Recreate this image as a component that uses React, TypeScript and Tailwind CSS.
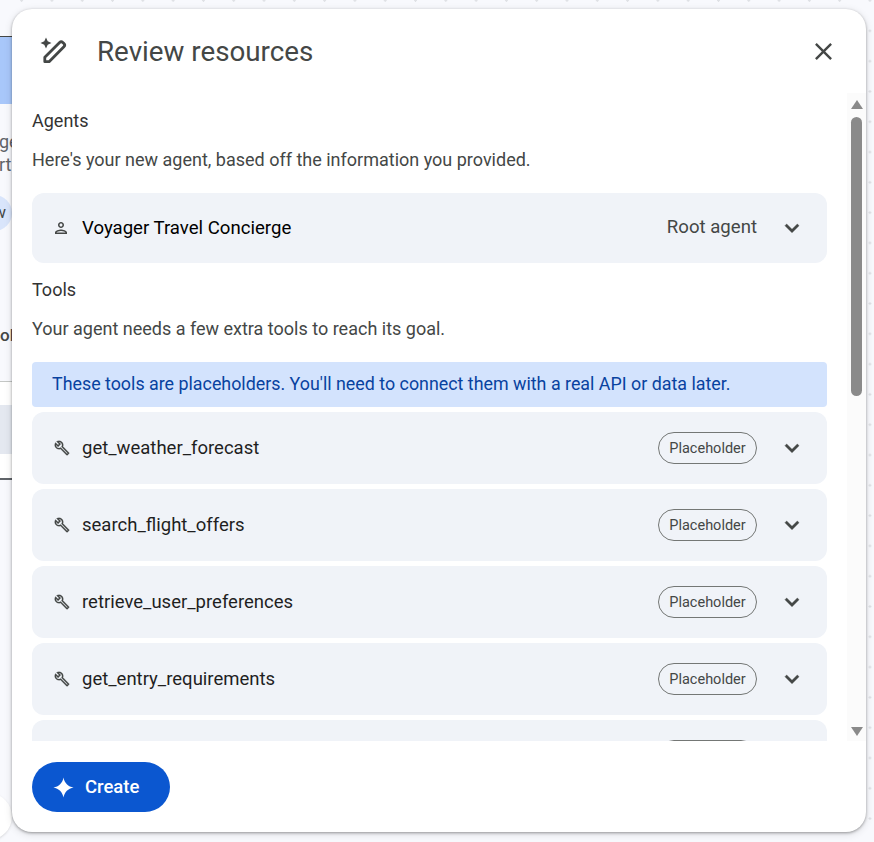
const TOOLS = [
  "get_weather_forecast",
  "search_flight_offers",
  "retrieve_user_preferences",
  "get_entry_requirements",
  "",
]

function ExpandIcon() {
  return (
    <svg viewBox="0 0 24 24" className="h-7 w-7 fill-[#444746] stroke-[#444746] stroke-[0.4]">
      <path d="M16.59 8.59L12 13.17 7.41 8.59 6 10l6 6 6-6z" />
    </svg>
  )
}

function PersonIcon() {
  return (
    <svg viewBox="0 0 24 24" className="h-[18px] w-[18px] fill-[#444746]">
      <path d="M12 6c1.1 0 2 .9 2 2s-.9 2-2 2-2-.9-2-2 .9-2 2-2m0 10c2.7 0 5.8 1.29 6 2H6c.23-.72 3.31-2 6-2m0-12C9.79 4 8 5.79 8 8s1.79 4 4 4 4-1.79 4-4-1.79-4-4-4zm0 10c-2.67 0-8 1.34-8 4v2h16v-2c0-2.66-5.33-4-8-4z" />
    </svg>
  )
}

function WrenchIcon() {
  return (
    <svg viewBox="0 0 24 24" className="h-4 w-4 fill-[#444746] stroke-[#444746] stroke-[0.3]">
      <path d="M22.61 18.99l-9.08-9.08c.93-2.34.45-5.1-1.44-7C9.79.61 6.21.4 3.66 2.26L7.5 6.11 6.08 7.52 2.25 3.69C.39 6.23.6 9.82 2.9 12.11c1.86 1.86 4.57 2.35 6.89 1.48l9.11 9.11c.39.39 1.02.39 1.41 0l2.3-2.3c.4-.38.4-1.01 0-1.41zm-3 1.6l-9.46-9.46c-.61.45-1.29.72-2 .82-1.36.2-2.79-.21-3.83-1.25C3.37 9.76 2.93 8.5 3 7.26l3.09 3.09 4.24-4.24-3.09-3.09c1.24-.07 2.49.37 3.44 1.31 1.08 1.08 1.49 2.57 1.24 3.96-.12.71-.42 1.37-.88 1.96l9.45 9.45-.88.89z" />
    </svg>
  )
}

function WandIcon() {
  return (
    <svg viewBox="0 0 30 30" className="h-[30px] w-[30px]">
      <path d="M7 0.5l1.7 3.8L12.5 6 8.7 7.7 7 11.5 5.3 7.7 1.5 6l3.8-1.7z" fill="#444746" />
      <path
        d="M5.8 24.7v-4.4L20.6 5.5c.9-.9 2.3-.9 3.2 0l1.1 1.1c.9.9.9 2.3 0 3.2L10.1 24.7z"
        fill="none"
        stroke="#444746"
        strokeWidth="2.8"
        strokeLinejoin="round"
      />
    </svg>
  )
}

function Row({ name }: { name: string }) {
  return (
    <div className="flex h-[72px] shrink-0 items-center rounded-xl bg-[#f0f3f8] pl-[22px] pr-[21px]">
      <WrenchIcon />
      <span className="ml-3 flex-1 pt-px text-[18.5px] text-[#1f1f1f]">{name}</span>
      <span className="flex h-8 w-[99px] items-center justify-center rounded-2xl border border-[#747775] pt-px text-[14.5px] text-[#444746]">
        Placeholder
      </span>
      <span className="ml-[21px] flex"><ExpandIcon /></span>
    </div>
  )
}

export default function App() {
  return (
    <div className="relative h-[842px] w-[874px] overflow-hidden bg-[#f8f9fd] bg-[radial-gradient(#dfe1e5_1.2px,transparent_1.4px)] bg-[size:30.3px_30.3px] bg-[position:6.5px_-14.6px] font-['Roboto',sans-serif]">
      {/* canvas behind the dialog */}
      <div className="absolute left-0 top-9 h-[68px] w-3 border-t border-[#444746] bg-[#a8c7fa]" />
      <span className="absolute left-[-1px] top-[128px] text-[18px] text-[#5f6368]">ge</span>
      <span className="absolute left-[-1px] top-[151px] text-[18px] text-[#5f6368]">rt</span>
      <div className="absolute left-[-26px] top-[195px] flex h-9 w-[38px] items-center justify-end rounded-full bg-[#d9e5fb] pr-[6px] text-[17px] text-[#444746]">w</div>
      <span className="absolute left-0 top-[323px] text-[17px] font-medium text-[#444746]">ol</span>
      <div className="absolute left-0 top-[381px] h-[99px] w-3 border-t border-b-2 border-t-[#c4c7c5] border-b-[#5f6368] bg-white">
        <div className="mt-[23px] h-[49px] bg-[#e4e8f0]" />
      </div>
      <div className="absolute left-[-35px] top-[793px] h-[47px] w-[47px] rounded-full bg-white shadow-sm" />

      {/* dialog */}
      <div className="absolute left-3 top-[9px] flex h-[823px] w-[854px] flex-col rounded-[20px] bg-white shadow-[0_1px_3px_rgba(0,0,0,0.35),0_2px_8px_rgba(0,0,0,0.12)]">
        <div className="flex h-[84px] shrink-0 items-center pl-[27px] pr-[28px] pt-px">
          <WandIcon />
          <h1 className="ml-[28px] flex-1 text-[27.75px] font-normal text-[#444746]">Review resources</h1>
          <svg viewBox="0 0 24 24" className="h-[29px] w-[29px] fill-[#444746]">
            <path d="M19 6.41L17.59 5 12 10.59 6.41 5 5 6.41 10.59 12 5 17.59 6.41 19 12 13.41 17.59 19 19 17.59 13.41 12z" />
          </svg>
        </div>

        <div className="flex h-[648px] shrink-0">
          <div className="flex w-[835px] shrink-0 flex-col overflow-hidden pl-5 pr-5">
            <h2 className="mt-[16px] text-[18px] font-normal leading-6 text-[#333]">Agents</h2>
            <p className="mt-[15px] text-[18px] leading-6 text-[#444746]">Here's your new agent, based off the information you provided.</p>
            <div className="mt-[21px] flex h-[70px] shrink-0 items-center rounded-xl bg-[#f0f3f8] pl-[20px] pr-[21px]">
              <PersonIcon />
              <span className="ml-3 flex-1 pt-px text-[18.6px] font-normal text-black">Voyager Travel Concierge</span>
              <span className="text-[18.6px] text-[#444746]">Root agent</span>
              <span className="ml-[21px] flex"><ExpandIcon /></span>
            </div>
            <h2 className="mt-[15px] text-[18px] font-normal leading-6 text-[#333]">Tools</h2>
            <p className="mt-[15px] text-[18px] leading-6 text-[#444746]">Your agent needs a few extra tools to reach its goal.</p>
            <div className="mt-[21px] flex h-[45px] shrink-0 items-center rounded-[4px] bg-[#d3e3fd] px-5 text-[17.85px] text-[#0842a0]">
              These tools are placeholders. You'll need to connect them with a real API or data later.
            </div>
            <div className="mt-[5px] flex flex-col gap-[5px]">
              {TOOLS.map((t) => (
                <Row key={t} name={t} />
              ))}
            </div>
          </div>
          <div className="relative w-[19px] shrink-0 bg-[#fbfbfb]">
            <div className="absolute left-[4px] top-[7px] h-0 w-0 border-x-[6px] border-b-[9px] border-x-transparent border-b-[#8a8a8a]" />
            <div className="absolute left-[4px] top-[24px] h-[279px] w-[11px] rounded-md bg-[#8a8a8a]" />
            <div className="absolute bottom-[5px] left-[4px] h-0 w-0 border-x-[6px] border-t-[9px] border-x-transparent border-t-[#8a8a8a]" />
          </div>
        </div>

        <div className="flex flex-1 items-start pl-5 pt-[21px]">
          <button className="flex h-[50px] w-[138px] items-center gap-[11px] rounded-full bg-[#0b57d0] pl-[21px] pt-px text-[18.5px] font-medium text-white">
            <svg viewBox="0 0 24 24" className="h-[21px] w-[21px] fill-white">
              <path d="M12 .5c.9 6 5.5 10.6 11.5 11.5C17.5 12.9 12.9 17.5 12 23.5 11.1 17.5 6.5 12.9 .5 12 6.5 11.1 11.1 6.5 12 .5z" />
            </svg>
            Create
          </button>
        </div>
      </div>
    </div>
  )
}
